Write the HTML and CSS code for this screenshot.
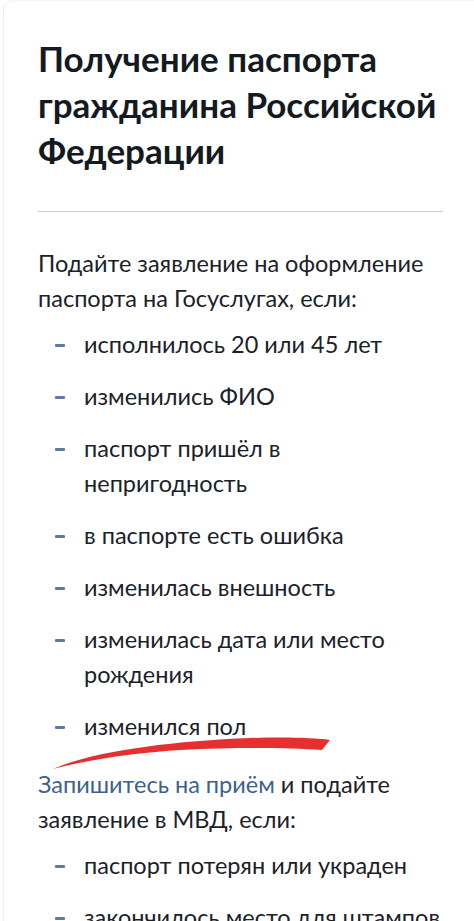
FILE: index.html
```html
<!DOCTYPE html>
<html lang="ru">
<head>
<meta charset="utf-8">
<link rel="stylesheet" href="styles.css">
</head>
<body>
<main class="card">
  <h1 class="title">Получение паспорта гражданина Российской Федерации</h1>
  <hr class="divider">
  <p class="para">Подайте заявление на оформление паспорта на Госуслугах, если:</p>
  <ul class="list">
    <li>исполнилось 20 или 45 лет</li>
    <li>изменились ФИО</li>
    <li>паспорт пришёл в непригодность</li>
    <li>в паспорте есть ошибка</li>
    <li>изменилась внешность</li>
    <li>изменилась дата или место рождения</li>
    <li>изменился пол</li>
  </ul>
  <p class="para para-second"><a class="link" href="#">Запишитесь на приём</a> и подайте заявление в МВД, если:</p>
  <ul class="list">
    <li>паспорт потерян или украден</li>
    <li class="single-line">закончилось место для штампов</li>
  </ul>
  <svg class="scribble" width="474" height="921" viewBox="0 0 474 921" aria-hidden="true">
    <path d="M53,769 C90,752 170,741 250,738 C290,737 315,738 330,740 L322,750 C290,748 240,747 180,750 C120,754 80,762 53,769 Z" fill="#e5302f"/>
  </svg>
</main>
</body>
</html>
```
FILE: styles.css
```css
html, body {
  margin: 0;
  padding: 0;
  background: #ffffff;
}
body {
  font-family: Lato, "Noto Sans", sans-serif;
  color: #1c2129;
  overflow: hidden;
  height: 921px;
}
.card {
  position: relative;
  box-sizing: border-box;
  height: 921px;
  overflow: hidden;
  margin-left: 3px;
  border-left: 1px solid #eceef1;
  border-top: 1px solid #f2f3f5;
  border-top-left-radius: 10px;
  padding: 34px 31px 0 34px;
}
.title {
  margin: 0;
  font-size: 35px;
  line-height: 46px;
  font-weight: 700;
  color: #141a22;
  padding-right: 4px;
}
.divider {
  border: 0;
  border-top: 1.5px solid #c5cacf;
  margin: 38px 0 0 0;
}
.para {
  margin: 34px 0 0 0;
  font-size: 23.5px;
  line-height: 35px;
}
.para-second {
  margin-top: 23px;
}
.link {
  color: #3b6290;
  text-decoration: none;
}
.list {
  list-style: none;
  margin: 11px 0 0 0;
  padding: 0 0 0 46px;
}
.list li {
  position: relative;
  font-size: 23.5px;
  line-height: 35px;
  margin-bottom: 17px;
  max-width: 356px;
}
.list li.single-line {
  white-space: nowrap;
  max-width: none;
}
.list li::before {
  content: "";
  position: absolute;
  left: -29px;
  top: 17px;
  width: 10px;
  height: 3px;
  border-radius: 1px;
  background: #5d7ba3;
}
.scribble {
  position: absolute;
  left: -4px;
  top: -1px;
  pointer-events: none;
}
```
